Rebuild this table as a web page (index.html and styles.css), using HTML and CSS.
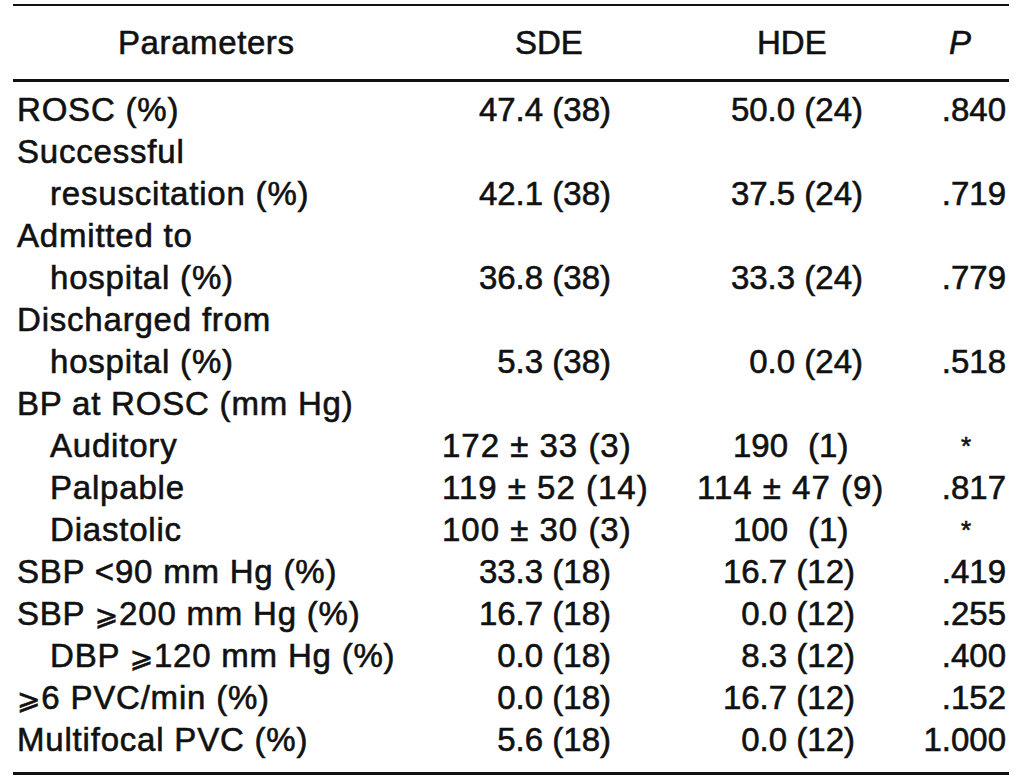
FILE: index.html
```html
<!DOCTYPE html>
<html lang="en">
<head>
<meta charset="utf-8">
<title>Parameters SDE HDE</title>
<link rel="stylesheet" href="styles.css">
</head>
<body>
<div class="table">
  <div class="head">
    <div class="h1">Parameters</div>
    <div class="h2">SDE</div>
    <div class="h3">HDE</div>
    <div class="h4"><i>P</i></div>
  </div>
  <div class="body">
    <div class="row"><div class="c1">ROSC (%)</div><div class="c2">47.4 (38)</div><div class="c3">50.0 (24)</div><div class="c4">.840</div></div>
    <div class="row"><div class="c1">Successful</div><div class="c2"></div><div class="c3"></div><div class="c4"></div></div>
    <div class="row"><div class="c1 ind">resuscitation (%)</div><div class="c2">42.1 (38)</div><div class="c3">37.5 (24)</div><div class="c4">.719</div></div>
    <div class="row"><div class="c1">Admitted to</div><div class="c2"></div><div class="c3"></div><div class="c4"></div></div>
    <div class="row"><div class="c1 ind">hospital (%)</div><div class="c2">36.8 (38)</div><div class="c3">33.3 (24)</div><div class="c4">.779</div></div>
    <div class="row"><div class="c1">Discharged from</div><div class="c2"></div><div class="c3"></div><div class="c4"></div></div>
    <div class="row"><div class="c1 ind">hospital (%)</div><div class="c2">5.3 (38)</div><div class="c3">0.0 (24)</div><div class="c4">.518</div></div>
    <div class="row"><div class="c1">BP at ROSC (mm Hg)</div><div class="c2"></div><div class="c3"></div><div class="c4"></div></div>
    <div class="row"><div class="c1 ind">Auditory</div><div class="c2 pm">172 ± 33 (3)</div><div class="c3 one">190<span class="n">(1)</span></div><div class="c4 star">*</div></div>
    <div class="row"><div class="c1 ind">Palpable</div><div class="c2 pm">119 ± 52 (14)</div><div class="c3 pm">114 ± 47 (9)</div><div class="c4">.817</div></div>
    <div class="row"><div class="c1 ind">Diastolic</div><div class="c2 pm">100 ± 30 (3)</div><div class="c3 one">100<span class="n">(1)</span></div><div class="c4 star">*</div></div>
    <div class="row"><div class="c1">SBP &lt;90 mm Hg (%)</div><div class="c2">33.3 (18)</div><div class="c3 lo">16.7 (12)</div><div class="c4">.419</div></div>
    <div class="row"><div class="c1">SBP <span class="ge">⩾</span>200 mm Hg (%)</div><div class="c2">16.7 (18)</div><div class="c3 lo">0.0 (12)</div><div class="c4">.255</div></div>
    <div class="row"><div class="c1 ind">DBP <span class="ge">⩾</span>120 mm Hg (%)</div><div class="c2">0.0 (18)</div><div class="c3 lo">8.3 (12)</div><div class="c4">.400</div></div>
    <div class="row"><div class="c1"><span class="ge">⩾</span>6 PVC/min (%)</div><div class="c2">0.0 (18)</div><div class="c3 lo">16.7 (12)</div><div class="c4">.152</div></div>
    <div class="row"><div class="c1">Multifocal PVC (%)</div><div class="c2">5.6 (18)</div><div class="c3 lo">0.0 (12)</div><div class="c4">1.000</div></div>
  </div>
</div>
</body>
</html>
```
FILE: styles.css
```css
html, body {
  margin: 0;
  padding: 0;
  background: #ffffff;
}

body {
  font-family: "Liberation Sans", "DejaVu Sans", Arial, sans-serif;
  font-size: 33px;
  color: #111111;
  -webkit-text-stroke: 0.6px #111111;
}

.table {
  width: 996px;
  margin: 4px 0 0 13px;
  border-top: 2px solid #111111;
  border-bottom: 3px solid #111111;
}

.head {
  display: grid;
  grid-template-columns: 417px 250px 220px 109px;
  line-height: 73px;
  border-bottom: 3px solid #111111;
  white-space: nowrap;
}

.h1 {
  padding-left: 105px;
  letter-spacing: 0.6px;
}
.h2 { padding-left: 85px; }
.h3 { padding-left: 77px; }
.h4 { padding-left: 49px; }

.body {
  padding: 7px 0 11px 0;
}

.row {
  display: grid;
  grid-template-columns: 417px 250px 220px 109px;
  height: 42px;
  line-height: 42px;
  white-space: nowrap;
}

.c1 {
  padding-left: 4px;
  letter-spacing: 0.8px;
}
.c1.ind { padding-left: 37px; }

.c2 {
  text-align: right;
  padding-right: 69px;
}
.c2.pm {
  text-align: left;
  padding-left: 12px;
  padding-right: 0;
  letter-spacing: 1px;
}

.c3 {
  text-align: right;
  padding-right: 37px;
}
.c3.lo { padding-right: 45px; }
.c3.pm {
  text-align: left;
  padding-left: 17px;
  padding-right: 0;
  letter-spacing: 1px;
}
.c3.one {
  text-align: left;
  padding-left: 53px;
  padding-right: 0;
}
.c3 .n { margin-left: 20px; }

.c4 {
  text-align: right;
  padding-right: 3px;
}
.c4.star {
  padding-right: 38px;
  font-size: 26px;
}

.ge {
  font-family: "DejaVu Sans", sans-serif;
  font-size: 28px;
}
```
